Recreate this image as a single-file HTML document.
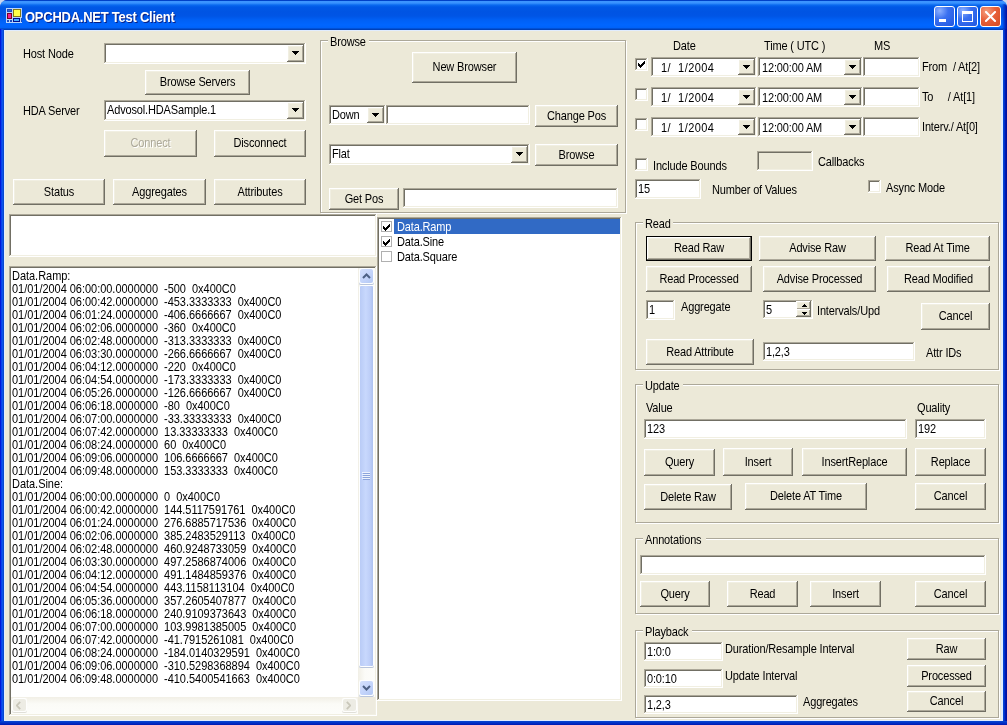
<!DOCTYPE html><html><head><meta charset="utf-8"><style>
html,body{margin:0;padding:0;width:1007px;height:725px;overflow:hidden;background:#C9D6EE}
body>*{position:absolute}
.t{will-change:transform;transform:scaleY(1.12);transform-origin:0 10.3px;font-family:"Liberation Sans",sans-serif;font-size:11px;line-height:13px;white-space:pre;color:#000;letter-spacing:-0.15px}
.tt{will-change:transform;transform:scaleY(1.12);transform-origin:0 12.5px;font-family:"Liberation Sans",sans-serif;font-size:13px;font-weight:bold;color:#fff;line-height:16px;white-space:pre;text-shadow:1px 1px 0 #0A1E80;letter-spacing:-0.25px}
</style></head><body>
<div style="left:0;top:0;width:1007px;height:725px;background:#0831D9;border-radius:8px 8px 0 0"></div>
<div style="left:0;top:0;width:1007px;height:30px;border-radius:7px 7px 0 0;background:linear-gradient(to bottom,#0041C8 0px,#0041C8 1px,#3D95FF 1px,#3A93FF 3px,#0A6AF0 5px,#0058E6 7px,#0054E3 12px,#0055E5 16px,#0060F5 20px,#0066FF 25px,#0062F8 28px,#0041B8 29px,#0041B8 30px)"></div>
<div style="left:1002px;top:4px;width:5px;height:26px;border-radius:0 4px 0 0;background:linear-gradient(to right,rgba(0,40,200,0),rgba(0,40,190,0.6) 2px,#0020B0 4px,#0010A0 5px)"></div>
<div style="left:0;top:29px;width:4px;height:696px;background:linear-gradient(to right,#0010D0,#0020E0 1px,#1060FF 2px,#0848D0 3px)"></div>
<div style="left:1003px;top:29px;width:4px;height:696px;background:linear-gradient(to right,#0848D0,#0040D8 1px,#0020C0 2px,#0010A0 3px)"></div>
<div style="left:0;top:721px;width:1007px;height:4px;background:linear-gradient(to bottom,#0848D0,#0030C8 2px,#0018B0 4px)"></div>
<div style="left:4px;top:30px;width:999px;height:691px;background:#E0ECFF"></div>
<div style="left:5px;top:31px;width:996px;height:689px;background:#ECE9D8"></div>
<svg style="left:6px;top:8px" width="16" height="15">
<rect x="0" y="0" width="16" height="15" fill="#B8D4FA"/>
<rect x="1" y="1" width="5" height="3" fill="#1C4CC0"/><rect x="2" y="2" width="3" height="1" fill="#3466D8"/>
<rect x="1" y="5" width="5" height="6" fill="#7A0020"/><rect x="2" y="6" width="3" height="4" fill="#F2208C"/>
<rect x="7" y="1" width="8" height="8" fill="#857812"/><rect x="8" y="2" width="6" height="6" fill="#FFFF48"/>
<rect x="7" y="10" width="7" height="4" fill="#000C8C"/><rect x="8" y="11" width="5" height="2" fill="#48AEFF"/>
<rect x="1" y="12" width="2" height="2" fill="#1C4CC0"/><rect x="4" y="12" width="2" height="2" fill="#1C4CC0"/>
<rect x="15" y="10" width="1" height="4" fill="#1C4CC0"/>
</svg>
<div class="tt" style="left:25px;top:10px">OPCHDA.NET Test Client</div>
<div style="left:934px;top:6px;width:19px;height:19px;border:1px solid #FFFFFF;border-radius:3px;background:radial-gradient(circle at 25% 20%,#8CB0FF 0%,#3A70F0 40%,#1F56E0 100%)"></div>
<div style="left:957px;top:6px;width:19px;height:19px;border:1px solid #FFFFFF;border-radius:3px;background:radial-gradient(circle at 25% 20%,#8CB0FF 0%,#3A70F0 40%,#1F56E0 100%)"></div>
<div style="left:980px;top:6px;width:19px;height:19px;border:1px solid #FFFFFF;border-radius:3px;background:radial-gradient(circle at 30% 25%,#F5A080 0%,#E8603A 45%,#D24A20 100%)"></div>
<div style="left:939px;top:19px;width:7px;height:3px;background:#fff"></div>
<div style="left:962px;top:11px;width:11px;height:11px;border:1px solid #fff;border-top-width:3px;box-sizing:border-box"></div>
<svg style="left:985px;top:11px" width="11" height="11"><path d="M1 1L10 10M10 1L1 10" stroke="#fff" stroke-width="2" stroke-linecap="square"/></svg>
<div class="t" style="left:23px;top:48px;color:#000;">Host Node</div>
<div style="left:104px;top:43px;width:202px;height:21px;background:#FFFFFF"></div>
<div style="left:104px;top:43px;width:201px;height:20px;background:#ACA899"></div>
<div style="left:105px;top:44px;width:200px;height:19px;background:#F1EFE2"></div>
<div style="left:105px;top:44px;width:199px;height:18px;background:#716F64"></div>
<div style="left:106px;top:45px;width:198px;height:17px;background:#FFFFFF"></div>
<div style="left:287px;top:45px;width:17px;height:17px;background:#716F64"></div>
<div style="left:287px;top:45px;width:16px;height:16px;background:#FFFFFF"></div>
<div style="left:288px;top:46px;width:15px;height:15px;background:#ACA899"></div>
<div style="left:288px;top:46px;width:14px;height:14px;background:#F1EFE2"></div>
<div style="left:289px;top:47px;width:13px;height:13px;background:#ECE9D8"></div>
<svg style="left:292px;top:51px" width="7" height="4"><path d="M0 0h7v1h-1v1h-1v1h-1v1h-1v-1h-1v-1h-1v-1h-1z" fill="#000"/></svg>
<div style="left:145px;top:70px;width:105px;height:25px;background:#716F64"></div>
<div style="left:145px;top:70px;width:104px;height:24px;background:#FFFFFF"></div>
<div style="left:146px;top:71px;width:103px;height:23px;background:#ACA899"></div>
<div style="left:146px;top:71px;width:102px;height:22px;background:#F1EFE2"></div>
<div style="left:147px;top:72px;width:101px;height:21px;background:#ECE9D8"></div>
<div class="t" style="left:145px;top:76px;width:105px;text-align:center;color:#000;">Browse Servers</div>
<div class="t" style="left:23px;top:105px;color:#000;">HDA Server</div>
<div style="left:104px;top:100px;width:202px;height:21px;background:#FFFFFF"></div>
<div style="left:104px;top:100px;width:201px;height:20px;background:#ACA899"></div>
<div style="left:105px;top:101px;width:200px;height:19px;background:#F1EFE2"></div>
<div style="left:105px;top:101px;width:199px;height:18px;background:#716F64"></div>
<div style="left:106px;top:102px;width:198px;height:17px;background:#FFFFFF"></div>
<div style="left:287px;top:102px;width:17px;height:17px;background:#716F64"></div>
<div style="left:287px;top:102px;width:16px;height:16px;background:#FFFFFF"></div>
<div style="left:288px;top:103px;width:15px;height:15px;background:#ACA899"></div>
<div style="left:288px;top:103px;width:14px;height:14px;background:#F1EFE2"></div>
<div style="left:289px;top:104px;width:13px;height:13px;background:#ECE9D8"></div>
<svg style="left:292px;top:108px" width="7" height="4"><path d="M0 0h7v1h-1v1h-1v1h-1v1h-1v-1h-1v-1h-1v-1h-1z" fill="#000"/></svg>
<div class="t" style="left:107px;top:104px;color:#000;">Advosol.HDASample.1</div>
<div style="left:104px;top:130px;width:93px;height:27px;background:#716F64"></div>
<div style="left:104px;top:130px;width:92px;height:26px;background:#FFFFFF"></div>
<div style="left:105px;top:131px;width:91px;height:25px;background:#ACA899"></div>
<div style="left:105px;top:131px;width:90px;height:24px;background:#F1EFE2"></div>
<div style="left:106px;top:132px;width:89px;height:23px;background:#ECE9D8"></div>
<div class="t" style="left:105px;top:138px;width:93px;text-align:center;color:#FFFFFF;">Connect</div>
<div class="t" style="left:104px;top:137px;width:93px;text-align:center;color:#ACA899;">Connect</div>
<div style="left:214px;top:130px;width:92px;height:27px;background:#716F64"></div>
<div style="left:214px;top:130px;width:91px;height:26px;background:#FFFFFF"></div>
<div style="left:215px;top:131px;width:90px;height:25px;background:#ACA899"></div>
<div style="left:215px;top:131px;width:89px;height:24px;background:#F1EFE2"></div>
<div style="left:216px;top:132px;width:88px;height:23px;background:#ECE9D8"></div>
<div class="t" style="left:214px;top:137px;width:92px;text-align:center;color:#000;">Disconnect</div>
<div style="left:13px;top:179px;width:92px;height:26px;background:#716F64"></div>
<div style="left:13px;top:179px;width:91px;height:25px;background:#FFFFFF"></div>
<div style="left:14px;top:180px;width:90px;height:24px;background:#ACA899"></div>
<div style="left:14px;top:180px;width:89px;height:23px;background:#F1EFE2"></div>
<div style="left:15px;top:181px;width:88px;height:22px;background:#ECE9D8"></div>
<div class="t" style="left:13px;top:186px;width:92px;text-align:center;color:#000;">Status</div>
<div style="left:113px;top:179px;width:93px;height:26px;background:#716F64"></div>
<div style="left:113px;top:179px;width:92px;height:25px;background:#FFFFFF"></div>
<div style="left:114px;top:180px;width:91px;height:24px;background:#ACA899"></div>
<div style="left:114px;top:180px;width:90px;height:23px;background:#F1EFE2"></div>
<div style="left:115px;top:181px;width:89px;height:22px;background:#ECE9D8"></div>
<div class="t" style="left:113px;top:186px;width:93px;text-align:center;color:#000;">Aggregates</div>
<div style="left:214px;top:179px;width:92px;height:26px;background:#716F64"></div>
<div style="left:214px;top:179px;width:91px;height:25px;background:#FFFFFF"></div>
<div style="left:215px;top:180px;width:90px;height:24px;background:#ACA899"></div>
<div style="left:215px;top:180px;width:89px;height:23px;background:#F1EFE2"></div>
<div style="left:216px;top:181px;width:88px;height:22px;background:#ECE9D8"></div>
<div class="t" style="left:214px;top:186px;width:92px;text-align:center;color:#000;">Attributes</div>
<div style="left:321px;top:41px;width:306px;height:173px;border:1px solid #FFFFFF;box-sizing:border-box"></div>
<div style="left:320px;top:40px;width:306px;height:173px;border:1px solid #ACA899;box-sizing:border-box"></div>
<div style="left:328px;top:34px;width:41px;height:13px;background:#ECE9D8"></div>
<div class="t" style="left:330px;top:36px;color:#000;">Browse</div>
<div style="left:412px;top:52px;width:105px;height:31px;background:#716F64"></div>
<div style="left:412px;top:52px;width:104px;height:30px;background:#FFFFFF"></div>
<div style="left:413px;top:53px;width:103px;height:29px;background:#ACA899"></div>
<div style="left:413px;top:53px;width:102px;height:28px;background:#F1EFE2"></div>
<div style="left:414px;top:54px;width:101px;height:27px;background:#ECE9D8"></div>
<div class="t" style="left:412px;top:61px;width:105px;text-align:center;color:#000;">New Browser</div>
<div style="left:329px;top:105px;width:57px;height:20px;background:#FFFFFF"></div>
<div style="left:329px;top:105px;width:56px;height:19px;background:#ACA899"></div>
<div style="left:330px;top:106px;width:55px;height:18px;background:#F1EFE2"></div>
<div style="left:330px;top:106px;width:54px;height:17px;background:#716F64"></div>
<div style="left:331px;top:107px;width:53px;height:16px;background:#FFFFFF"></div>
<div style="left:367px;top:107px;width:17px;height:16px;background:#716F64"></div>
<div style="left:367px;top:107px;width:16px;height:15px;background:#FFFFFF"></div>
<div style="left:368px;top:108px;width:15px;height:14px;background:#ACA899"></div>
<div style="left:368px;top:108px;width:14px;height:13px;background:#F1EFE2"></div>
<div style="left:369px;top:109px;width:13px;height:12px;background:#ECE9D8"></div>
<svg style="left:372px;top:113px" width="7" height="4"><path d="M0 0h7v1h-1v1h-1v1h-1v1h-1v-1h-1v-1h-1v-1h-1z" fill="#000"/></svg>
<div class="t" style="left:332px;top:109px;color:#000;">Down</div>
<div style="left:386px;top:105px;width:144px;height:20px;background:#FFFFFF"></div>
<div style="left:386px;top:105px;width:143px;height:19px;background:#ACA899"></div>
<div style="left:387px;top:106px;width:142px;height:18px;background:#F1EFE2"></div>
<div style="left:387px;top:106px;width:141px;height:17px;background:#716F64"></div>
<div style="left:388px;top:107px;width:140px;height:16px;background:#FFFFFF"></div>
<div style="left:535px;top:105px;width:83px;height:22px;background:#716F64"></div>
<div style="left:535px;top:105px;width:82px;height:21px;background:#FFFFFF"></div>
<div style="left:536px;top:106px;width:81px;height:20px;background:#ACA899"></div>
<div style="left:536px;top:106px;width:80px;height:19px;background:#F1EFE2"></div>
<div style="left:537px;top:107px;width:79px;height:18px;background:#ECE9D8"></div>
<div class="t" style="left:535px;top:110px;width:83px;text-align:center;color:#000;">Change Pos</div>
<div style="left:329px;top:144px;width:201px;height:21px;background:#FFFFFF"></div>
<div style="left:329px;top:144px;width:200px;height:20px;background:#ACA899"></div>
<div style="left:330px;top:145px;width:199px;height:19px;background:#F1EFE2"></div>
<div style="left:330px;top:145px;width:198px;height:18px;background:#716F64"></div>
<div style="left:331px;top:146px;width:197px;height:17px;background:#FFFFFF"></div>
<div style="left:511px;top:146px;width:17px;height:17px;background:#716F64"></div>
<div style="left:511px;top:146px;width:16px;height:16px;background:#FFFFFF"></div>
<div style="left:512px;top:147px;width:15px;height:15px;background:#ACA899"></div>
<div style="left:512px;top:147px;width:14px;height:14px;background:#F1EFE2"></div>
<div style="left:513px;top:148px;width:13px;height:13px;background:#ECE9D8"></div>
<svg style="left:516px;top:152px" width="7" height="4"><path d="M0 0h7v1h-1v1h-1v1h-1v1h-1v-1h-1v-1h-1v-1h-1z" fill="#000"/></svg>
<div class="t" style="left:332px;top:148px;color:#000;">Flat</div>
<div style="left:535px;top:144px;width:83px;height:22px;background:#716F64"></div>
<div style="left:535px;top:144px;width:82px;height:21px;background:#FFFFFF"></div>
<div style="left:536px;top:145px;width:81px;height:20px;background:#ACA899"></div>
<div style="left:536px;top:145px;width:80px;height:19px;background:#F1EFE2"></div>
<div style="left:537px;top:146px;width:79px;height:18px;background:#ECE9D8"></div>
<div class="t" style="left:535px;top:149px;width:83px;text-align:center;color:#000;">Browse</div>
<div style="left:329px;top:188px;width:70px;height:22px;background:#716F64"></div>
<div style="left:329px;top:188px;width:69px;height:21px;background:#FFFFFF"></div>
<div style="left:330px;top:189px;width:68px;height:20px;background:#ACA899"></div>
<div style="left:330px;top:189px;width:67px;height:19px;background:#F1EFE2"></div>
<div style="left:331px;top:190px;width:66px;height:18px;background:#ECE9D8"></div>
<div class="t" style="left:329px;top:193px;width:70px;text-align:center;color:#000;">Get Pos</div>
<div style="left:403px;top:188px;width:215px;height:20px;background:#FFFFFF"></div>
<div style="left:403px;top:188px;width:214px;height:19px;background:#ACA899"></div>
<div style="left:404px;top:189px;width:213px;height:18px;background:#F1EFE2"></div>
<div style="left:404px;top:189px;width:212px;height:17px;background:#716F64"></div>
<div style="left:405px;top:190px;width:211px;height:16px;background:#FFFFFF"></div>
<div style="left:9px;top:214px;width:368px;height:43px;background:#FFFFFF"></div>
<div style="left:9px;top:214px;width:367px;height:42px;background:#ACA899"></div>
<div style="left:10px;top:215px;width:366px;height:41px;background:#F1EFE2"></div>
<div style="left:10px;top:215px;width:365px;height:40px;background:#716F64"></div>
<div style="left:11px;top:216px;width:364px;height:39px;background:#FFFFFF"></div>
<div style="left:9px;top:266px;width:368px;height:450px;background:#FFFFFF"></div>
<div style="left:9px;top:266px;width:367px;height:449px;background:#ACA899"></div>
<div style="left:10px;top:267px;width:366px;height:448px;background:#F1EFE2"></div>
<div style="left:10px;top:267px;width:365px;height:447px;background:#716F64"></div>
<div style="left:11px;top:268px;width:364px;height:446px;background:#FFFFFF"></div>
<div class="t" style="left:12px;top:270px;color:#000;letter-spacing:-0.03px">Data.Ramp:</div>
<div class="t" style="left:12px;top:283px;color:#000;letter-spacing:-0.03px">01/01/2004 06:00:00.0000000  -500  0x400C0</div>
<div class="t" style="left:12px;top:296px;color:#000;letter-spacing:-0.03px">01/01/2004 06:00:42.0000000  -453.3333333  0x400C0</div>
<div class="t" style="left:12px;top:309px;color:#000;letter-spacing:-0.03px">01/01/2004 06:01:24.0000000  -406.6666667  0x400C0</div>
<div class="t" style="left:12px;top:322px;color:#000;letter-spacing:-0.03px">01/01/2004 06:02:06.0000000  -360  0x400C0</div>
<div class="t" style="left:12px;top:335px;color:#000;letter-spacing:-0.03px">01/01/2004 06:02:48.0000000  -313.3333333  0x400C0</div>
<div class="t" style="left:12px;top:348px;color:#000;letter-spacing:-0.03px">01/01/2004 06:03:30.0000000  -266.6666667  0x400C0</div>
<div class="t" style="left:12px;top:361px;color:#000;letter-spacing:-0.03px">01/01/2004 06:04:12.0000000  -220  0x400C0</div>
<div class="t" style="left:12px;top:374px;color:#000;letter-spacing:-0.03px">01/01/2004 06:04:54.0000000  -173.3333333  0x400C0</div>
<div class="t" style="left:12px;top:387px;color:#000;letter-spacing:-0.03px">01/01/2004 06:05:26.0000000  -126.6666667  0x400C0</div>
<div class="t" style="left:12px;top:400px;color:#000;letter-spacing:-0.03px">01/01/2004 06:06:18.0000000  -80  0x400C0</div>
<div class="t" style="left:12px;top:413px;color:#000;letter-spacing:-0.03px">01/01/2004 06:07:00.0000000  -33.33333333  0x400C0</div>
<div class="t" style="left:12px;top:426px;color:#000;letter-spacing:-0.03px">01/01/2004 06:07:42.0000000  13.33333333  0x400C0</div>
<div class="t" style="left:12px;top:439px;color:#000;letter-spacing:-0.03px">01/01/2004 06:08:24.0000000  60  0x400C0</div>
<div class="t" style="left:12px;top:452px;color:#000;letter-spacing:-0.03px">01/01/2004 06:09:06.0000000  106.6666667  0x400C0</div>
<div class="t" style="left:12px;top:465px;color:#000;letter-spacing:-0.03px">01/01/2004 06:09:48.0000000  153.3333333  0x400C0</div>
<div class="t" style="left:12px;top:478px;color:#000;letter-spacing:-0.03px">Data.Sine:</div>
<div class="t" style="left:12px;top:491px;color:#000;letter-spacing:-0.03px">01/01/2004 06:00:00.0000000  0  0x400C0</div>
<div class="t" style="left:12px;top:504px;color:#000;letter-spacing:-0.03px">01/01/2004 06:00:42.0000000  144.5117591761  0x400C0</div>
<div class="t" style="left:12px;top:517px;color:#000;letter-spacing:-0.03px">01/01/2004 06:01:24.0000000  276.6885717536  0x400C0</div>
<div class="t" style="left:12px;top:530px;color:#000;letter-spacing:-0.03px">01/01/2004 06:02:06.0000000  385.2483529113  0x400C0</div>
<div class="t" style="left:12px;top:543px;color:#000;letter-spacing:-0.03px">01/01/2004 06:02:48.0000000  460.9248733059  0x400C0</div>
<div class="t" style="left:12px;top:556px;color:#000;letter-spacing:-0.03px">01/01/2004 06:03:30.0000000  497.2586874006  0x400C0</div>
<div class="t" style="left:12px;top:569px;color:#000;letter-spacing:-0.03px">01/01/2004 06:04:12.0000000  491.1484859376  0x400C0</div>
<div class="t" style="left:12px;top:582px;color:#000;letter-spacing:-0.03px">01/01/2004 06:04:54.0000000  443.1158113104  0x400C0</div>
<div class="t" style="left:12px;top:595px;color:#000;letter-spacing:-0.03px">01/01/2004 06:05:36.0000000  357.2605407877  0x400C0</div>
<div class="t" style="left:12px;top:608px;color:#000;letter-spacing:-0.03px">01/01/2004 06:06:18.0000000  240.9109373643  0x400C0</div>
<div class="t" style="left:12px;top:621px;color:#000;letter-spacing:-0.03px">01/01/2004 06:07:00.0000000  103.9981385005  0x400C0</div>
<div class="t" style="left:12px;top:634px;color:#000;letter-spacing:-0.03px">01/01/2004 06:07:42.0000000  -41.7915261081  0x400C0</div>
<div class="t" style="left:12px;top:647px;color:#000;letter-spacing:-0.03px">01/01/2004 06:08:24.0000000  -184.0140329591  0x400C0</div>
<div class="t" style="left:12px;top:660px;color:#000;letter-spacing:-0.03px">01/01/2004 06:09:06.0000000  -310.5298368894  0x400C0</div>
<div class="t" style="left:12px;top:673px;color:#000;letter-spacing:-0.03px">01/01/2004 06:09:48.0000000  -410.5400541663  0x400C0</div>
<div style="left:358px;top:268px;width:17px;height:429px;background:linear-gradient(to right,#F1EFE6,#FBFBF7 40%,#FDFDFA)"></div>
<div style="left:359px;top:268px;width:15px;height:16px;border-radius:2px;background:#FDFEFF;box-shadow:0 1px 0 #B9C5DC"></div>
<div style="left:360px;top:269px;width:13px;height:14px;border-radius:2px;background:linear-gradient(135deg,#D4E0FD 0%,#C5D5FB 50%,#B3C8F4 100%)"></div>
<svg style="left:362px;top:273px" width="9" height="6"><path d="M1 5L4.5 1.5L8 5" stroke="#4D6185" stroke-width="2" fill="none"/></svg>
<div style="left:359px;top:285px;width:15px;height:382px;border-radius:2px;background:#FDFEFF;box-shadow:0 1px 0 #B9C5DC"></div>
<div style="left:360px;top:286px;width:13px;height:380px;border-radius:1px;background:linear-gradient(to right,#B9CBF6,#C8D8FD 45%,#BCCDF7 80%,#ADC1EE)"></div>
<svg style="left:362px;top:472px" width="8" height="8"><path d="M0 0.5h8M0 2.5h8M0 4.5h8M0 6.5h8" stroke="#EEF4FE" stroke-width="1"/><path d="M1 1.5h7M1 3.5h7M1 5.5h7M1 7.5h7" stroke="#8CA5DC" stroke-width="1"/></svg>
<div style="left:359px;top:680px;width:15px;height:16px;border-radius:2px;background:#FDFEFF;box-shadow:0 1px 0 #B9C5DC"></div>
<div style="left:360px;top:681px;width:13px;height:14px;border-radius:2px;background:linear-gradient(135deg,#D4E0FD 0%,#C5D5FB 50%,#B3C8F4 100%)"></div>
<svg style="left:362px;top:685px" width="9" height="6"><path d="M1 1L4.5 4.5L8 1" stroke="#4D6185" stroke-width="2" fill="none"/></svg>
<div style="left:11px;top:697px;width:347px;height:17px;background:linear-gradient(to bottom,#F1EFE6,#FBFBF7 40%,#FDFDFA)"></div>
<div style="left:12px;top:698px;width:15px;height:14px;border-radius:2px;background:#FEFEFD;box-shadow:0 1px 0 #E0DFD8"></div>
<div style="left:13px;top:699px;width:13px;height:12px;border-radius:2px;background:#EDECE4"></div>
<svg style="left:16px;top:701px" width="5" height="9"><path d="M4.2 0.8L0.8 4.5L4.2 8.2" stroke="#C9C7BA" stroke-width="1.8" fill="none"/></svg>
<div style="left:342px;top:698px;width:15px;height:14px;border-radius:2px;background:#FEFEFD;box-shadow:0 1px 0 #E0DFD8"></div>
<div style="left:343px;top:699px;width:13px;height:12px;border-radius:2px;background:#EDECE4"></div>
<svg style="left:346px;top:701px" width="5" height="9"><path d="M0.8 0.8L4.2 4.5L0.8 8.2" stroke="#C9C7BA" stroke-width="1.8" fill="none"/></svg>
<div style="left:358px;top:697px;width:17px;height:17px;background:#EEEBDF"></div>
<div style="left:377px;top:217px;width:245px;height:484px;background:#FFFFFF"></div>
<div style="left:377px;top:217px;width:244px;height:483px;background:#ACA899"></div>
<div style="left:378px;top:218px;width:243px;height:482px;background:#F1EFE2"></div>
<div style="left:378px;top:218px;width:242px;height:481px;background:#716F64"></div>
<div style="left:379px;top:219px;width:241px;height:480px;background:#FFFFFF"></div>
<div style="left:394px;top:219px;width:226px;height:15px;background:#316AC5"></div>
<div style="left:381px;top:221px;width:11px;height:11px;border:1px solid #B0B0B0;box-sizing:border-box;background:#fff"></div>
<svg style="left:383px;top:224px" width="7" height="7"><path d="M6 0h1v3h-1v1h-1v1h-1v1h-1v1h-1v-1h-1v-1h-1v-3h1v1h1v1h1v-1h1v-1h1v-1h1z" fill="#000"/></svg>
<div class="t" style="left:397px;top:221px;color:#fff;">Data.Ramp</div>
<div style="left:381px;top:236px;width:11px;height:11px;border:1px solid #B0B0B0;box-sizing:border-box;background:#fff"></div>
<svg style="left:383px;top:239px" width="7" height="7"><path d="M6 0h1v3h-1v1h-1v1h-1v1h-1v1h-1v-1h-1v-1h-1v-3h1v1h1v1h1v-1h1v-1h1v-1h1z" fill="#000"/></svg>
<div class="t" style="left:397px;top:236px;color:#000;">Data.Sine</div>
<div style="left:381px;top:251px;width:11px;height:11px;border:1px solid #B0B0B0;box-sizing:border-box;background:#fff"></div>
<div class="t" style="left:397px;top:251px;color:#000;">Data.Square</div>
<div class="t" style="left:673px;top:40px;color:#000;">Date</div>
<div class="t" style="left:764px;top:40px;color:#000;">Time ( UTC )</div>
<div class="t" style="left:874px;top:40px;color:#000;">MS</div>
<div style="left:635px;top:58px;width:13px;height:13px;background:#FFFFFF"></div>
<div style="left:635px;top:58px;width:12px;height:12px;background:#ACA899"></div>
<div style="left:636px;top:59px;width:11px;height:11px;background:#F1EFE2"></div>
<div style="left:636px;top:59px;width:10px;height:10px;background:#716F64"></div>
<div style="left:637px;top:60px;width:9px;height:9px;background:#FFFFFF"></div>
<svg style="left:638px;top:61px" width="7" height="7"><path d="M6 0h1v3h-1v1h-1v1h-1v1h-1v1h-1v-1h-1v-1h-1v-3h1v1h1v1h1v-1h1v-1h1v-1h1z" fill="#000"/></svg>
<div style="left:651px;top:57px;width:106px;height:20px;background:#FFFFFF"></div>
<div style="left:651px;top:57px;width:105px;height:19px;background:#ACA899"></div>
<div style="left:652px;top:58px;width:104px;height:18px;background:#F1EFE2"></div>
<div style="left:652px;top:58px;width:103px;height:17px;background:#716F64"></div>
<div style="left:653px;top:59px;width:102px;height:16px;background:#FFFFFF"></div>
<div style="left:738px;top:59px;width:17px;height:16px;background:#716F64"></div>
<div style="left:738px;top:59px;width:16px;height:15px;background:#FFFFFF"></div>
<div style="left:739px;top:60px;width:15px;height:14px;background:#ACA899"></div>
<div style="left:739px;top:60px;width:14px;height:13px;background:#F1EFE2"></div>
<div style="left:740px;top:61px;width:13px;height:12px;background:#ECE9D8"></div>
<svg style="left:743px;top:65px" width="7" height="4"><path d="M0 0h7v1h-1v1h-1v1h-1v1h-1v-1h-1v-1h-1v-1h-1z" fill="#000"/></svg>
<div class="t" style="left:661px;top:62px;color:#000;letter-spacing:0.45px">1/&nbsp; 1/2004</div>
<div style="left:758px;top:57px;width:105px;height:20px;background:#FFFFFF"></div>
<div style="left:758px;top:57px;width:104px;height:19px;background:#ACA899"></div>
<div style="left:759px;top:58px;width:103px;height:18px;background:#F1EFE2"></div>
<div style="left:759px;top:58px;width:102px;height:17px;background:#716F64"></div>
<div style="left:760px;top:59px;width:101px;height:16px;background:#FFFFFF"></div>
<div style="left:844px;top:59px;width:17px;height:16px;background:#716F64"></div>
<div style="left:844px;top:59px;width:16px;height:15px;background:#FFFFFF"></div>
<div style="left:845px;top:60px;width:15px;height:14px;background:#ACA899"></div>
<div style="left:845px;top:60px;width:14px;height:13px;background:#F1EFE2"></div>
<div style="left:846px;top:61px;width:13px;height:12px;background:#ECE9D8"></div>
<svg style="left:849px;top:65px" width="7" height="4"><path d="M0 0h7v1h-1v1h-1v1h-1v1h-1v-1h-1v-1h-1v-1h-1z" fill="#000"/></svg>
<div class="t" style="left:762px;top:62px;color:#000;">12:00:00 AM</div>
<div style="left:863px;top:57px;width:57px;height:20px;background:#FFFFFF"></div>
<div style="left:863px;top:57px;width:56px;height:19px;background:#ACA899"></div>
<div style="left:864px;top:58px;width:55px;height:18px;background:#F1EFE2"></div>
<div style="left:864px;top:58px;width:54px;height:17px;background:#716F64"></div>
<div style="left:865px;top:59px;width:53px;height:16px;background:#FFFFFF"></div>
<div class="t" style="left:922px;top:61px;color:#000;">From&nbsp; / At[2]</div>
<div style="left:635px;top:88px;width:13px;height:13px;background:#FFFFFF"></div>
<div style="left:635px;top:88px;width:12px;height:12px;background:#ACA899"></div>
<div style="left:636px;top:89px;width:11px;height:11px;background:#F1EFE2"></div>
<div style="left:636px;top:89px;width:10px;height:10px;background:#716F64"></div>
<div style="left:637px;top:90px;width:9px;height:9px;background:#FFFFFF"></div>
<div style="left:651px;top:87px;width:106px;height:20px;background:#FFFFFF"></div>
<div style="left:651px;top:87px;width:105px;height:19px;background:#ACA899"></div>
<div style="left:652px;top:88px;width:104px;height:18px;background:#F1EFE2"></div>
<div style="left:652px;top:88px;width:103px;height:17px;background:#716F64"></div>
<div style="left:653px;top:89px;width:102px;height:16px;background:#FFFFFF"></div>
<div style="left:738px;top:89px;width:17px;height:16px;background:#716F64"></div>
<div style="left:738px;top:89px;width:16px;height:15px;background:#FFFFFF"></div>
<div style="left:739px;top:90px;width:15px;height:14px;background:#ACA899"></div>
<div style="left:739px;top:90px;width:14px;height:13px;background:#F1EFE2"></div>
<div style="left:740px;top:91px;width:13px;height:12px;background:#ECE9D8"></div>
<svg style="left:743px;top:95px" width="7" height="4"><path d="M0 0h7v1h-1v1h-1v1h-1v1h-1v-1h-1v-1h-1v-1h-1z" fill="#000"/></svg>
<div class="t" style="left:661px;top:92px;color:#000;letter-spacing:0.45px">1/&nbsp; 1/2004</div>
<div style="left:758px;top:87px;width:105px;height:20px;background:#FFFFFF"></div>
<div style="left:758px;top:87px;width:104px;height:19px;background:#ACA899"></div>
<div style="left:759px;top:88px;width:103px;height:18px;background:#F1EFE2"></div>
<div style="left:759px;top:88px;width:102px;height:17px;background:#716F64"></div>
<div style="left:760px;top:89px;width:101px;height:16px;background:#FFFFFF"></div>
<div style="left:844px;top:89px;width:17px;height:16px;background:#716F64"></div>
<div style="left:844px;top:89px;width:16px;height:15px;background:#FFFFFF"></div>
<div style="left:845px;top:90px;width:15px;height:14px;background:#ACA899"></div>
<div style="left:845px;top:90px;width:14px;height:13px;background:#F1EFE2"></div>
<div style="left:846px;top:91px;width:13px;height:12px;background:#ECE9D8"></div>
<svg style="left:849px;top:95px" width="7" height="4"><path d="M0 0h7v1h-1v1h-1v1h-1v1h-1v-1h-1v-1h-1v-1h-1z" fill="#000"/></svg>
<div class="t" style="left:762px;top:92px;color:#000;">12:00:00 AM</div>
<div style="left:863px;top:87px;width:57px;height:20px;background:#FFFFFF"></div>
<div style="left:863px;top:87px;width:56px;height:19px;background:#ACA899"></div>
<div style="left:864px;top:88px;width:55px;height:18px;background:#F1EFE2"></div>
<div style="left:864px;top:88px;width:54px;height:17px;background:#716F64"></div>
<div style="left:865px;top:89px;width:53px;height:16px;background:#FFFFFF"></div>
<div class="t" style="left:922px;top:91px;color:#000;">To&nbsp;&nbsp;&nbsp;&nbsp; / At[1]</div>
<div style="left:635px;top:118px;width:13px;height:13px;background:#FFFFFF"></div>
<div style="left:635px;top:118px;width:12px;height:12px;background:#ACA899"></div>
<div style="left:636px;top:119px;width:11px;height:11px;background:#F1EFE2"></div>
<div style="left:636px;top:119px;width:10px;height:10px;background:#716F64"></div>
<div style="left:637px;top:120px;width:9px;height:9px;background:#FFFFFF"></div>
<div style="left:651px;top:117px;width:106px;height:20px;background:#FFFFFF"></div>
<div style="left:651px;top:117px;width:105px;height:19px;background:#ACA899"></div>
<div style="left:652px;top:118px;width:104px;height:18px;background:#F1EFE2"></div>
<div style="left:652px;top:118px;width:103px;height:17px;background:#716F64"></div>
<div style="left:653px;top:119px;width:102px;height:16px;background:#FFFFFF"></div>
<div style="left:738px;top:119px;width:17px;height:16px;background:#716F64"></div>
<div style="left:738px;top:119px;width:16px;height:15px;background:#FFFFFF"></div>
<div style="left:739px;top:120px;width:15px;height:14px;background:#ACA899"></div>
<div style="left:739px;top:120px;width:14px;height:13px;background:#F1EFE2"></div>
<div style="left:740px;top:121px;width:13px;height:12px;background:#ECE9D8"></div>
<svg style="left:743px;top:125px" width="7" height="4"><path d="M0 0h7v1h-1v1h-1v1h-1v1h-1v-1h-1v-1h-1v-1h-1z" fill="#000"/></svg>
<div class="t" style="left:661px;top:122px;color:#000;letter-spacing:0.45px">1/&nbsp; 1/2004</div>
<div style="left:758px;top:117px;width:105px;height:20px;background:#FFFFFF"></div>
<div style="left:758px;top:117px;width:104px;height:19px;background:#ACA899"></div>
<div style="left:759px;top:118px;width:103px;height:18px;background:#F1EFE2"></div>
<div style="left:759px;top:118px;width:102px;height:17px;background:#716F64"></div>
<div style="left:760px;top:119px;width:101px;height:16px;background:#FFFFFF"></div>
<div style="left:844px;top:119px;width:17px;height:16px;background:#716F64"></div>
<div style="left:844px;top:119px;width:16px;height:15px;background:#FFFFFF"></div>
<div style="left:845px;top:120px;width:15px;height:14px;background:#ACA899"></div>
<div style="left:845px;top:120px;width:14px;height:13px;background:#F1EFE2"></div>
<div style="left:846px;top:121px;width:13px;height:12px;background:#ECE9D8"></div>
<svg style="left:849px;top:125px" width="7" height="4"><path d="M0 0h7v1h-1v1h-1v1h-1v1h-1v-1h-1v-1h-1v-1h-1z" fill="#000"/></svg>
<div class="t" style="left:762px;top:122px;color:#000;">12:00:00 AM</div>
<div style="left:863px;top:117px;width:57px;height:20px;background:#FFFFFF"></div>
<div style="left:863px;top:117px;width:56px;height:19px;background:#ACA899"></div>
<div style="left:864px;top:118px;width:55px;height:18px;background:#F1EFE2"></div>
<div style="left:864px;top:118px;width:54px;height:17px;background:#716F64"></div>
<div style="left:865px;top:119px;width:53px;height:16px;background:#FFFFFF"></div>
<div class="t" style="left:922px;top:121px;color:#000;">Interv./ At[0]</div>
<div style="left:635px;top:158px;width:13px;height:13px;background:#FFFFFF"></div>
<div style="left:635px;top:158px;width:12px;height:12px;background:#ACA899"></div>
<div style="left:636px;top:159px;width:11px;height:11px;background:#F1EFE2"></div>
<div style="left:636px;top:159px;width:10px;height:10px;background:#716F64"></div>
<div style="left:637px;top:160px;width:9px;height:9px;background:#FFFFFF"></div>
<div class="t" style="left:653px;top:160px;color:#000;">Include Bounds</div>
<div style="left:757px;top:151px;width:56px;height:20px;background:#FFFFFF"></div>
<div style="left:757px;top:151px;width:55px;height:19px;background:#ACA899"></div>
<div style="left:758px;top:152px;width:54px;height:18px;background:#F1EFE2"></div>
<div style="left:758px;top:152px;width:53px;height:17px;background:#716F64"></div>
<div style="left:759px;top:153px;width:52px;height:16px;background:#ECE9D8"></div>
<div class="t" style="left:818px;top:156px;color:#000;">Callbacks</div>
<div style="left:635px;top:179px;width:66px;height:20px;background:#FFFFFF"></div>
<div style="left:635px;top:179px;width:65px;height:19px;background:#ACA899"></div>
<div style="left:636px;top:180px;width:64px;height:18px;background:#F1EFE2"></div>
<div style="left:636px;top:180px;width:63px;height:17px;background:#716F64"></div>
<div style="left:637px;top:181px;width:62px;height:16px;background:#FFFFFF"></div>
<div class="t" style="left:638px;top:183px;color:#000;">15</div>
<div class="t" style="left:712px;top:184px;color:#000;">Number of Values</div>
<div style="left:868px;top:180px;width:13px;height:13px;background:#FFFFFF"></div>
<div style="left:868px;top:180px;width:12px;height:12px;background:#ACA899"></div>
<div style="left:869px;top:181px;width:11px;height:11px;background:#F1EFE2"></div>
<div style="left:869px;top:181px;width:10px;height:10px;background:#716F64"></div>
<div style="left:870px;top:182px;width:9px;height:9px;background:#FFFFFF"></div>
<div class="t" style="left:886px;top:182px;color:#000;">Async Mode</div>
<div style="left:636px;top:223px;width:364px;height:148px;border:1px solid #FFFFFF;box-sizing:border-box"></div>
<div style="left:635px;top:222px;width:364px;height:148px;border:1px solid #ACA899;box-sizing:border-box"></div>
<div style="left:643px;top:216px;width:30px;height:13px;background:#ECE9D8"></div>
<div class="t" style="left:645px;top:218px;color:#000;">Read</div>
<div style="left:646px;top:236px;width:106px;height:25px;background:#000"></div>
<div style="left:647px;top:237px;width:104px;height:23px;background:#716F64"></div>
<div style="left:647px;top:237px;width:103px;height:22px;background:#FFFFFF"></div>
<div style="left:648px;top:238px;width:102px;height:21px;background:#ACA899"></div>
<div style="left:648px;top:238px;width:101px;height:20px;background:#F1EFE2"></div>
<div style="left:649px;top:239px;width:100px;height:19px;background:#ECE9D8"></div>
<div class="t" style="left:646px;top:242px;width:106px;text-align:center;color:#000;">Read Raw</div>
<div style="left:759px;top:236px;width:117px;height:25px;background:#716F64"></div>
<div style="left:759px;top:236px;width:116px;height:24px;background:#FFFFFF"></div>
<div style="left:760px;top:237px;width:115px;height:23px;background:#ACA899"></div>
<div style="left:760px;top:237px;width:114px;height:22px;background:#F1EFE2"></div>
<div style="left:761px;top:238px;width:113px;height:21px;background:#ECE9D8"></div>
<div class="t" style="left:759px;top:242px;width:117px;text-align:center;color:#000;">Advise Raw</div>
<div style="left:885px;top:236px;width:105px;height:25px;background:#716F64"></div>
<div style="left:885px;top:236px;width:104px;height:24px;background:#FFFFFF"></div>
<div style="left:886px;top:237px;width:103px;height:23px;background:#ACA899"></div>
<div style="left:886px;top:237px;width:102px;height:22px;background:#F1EFE2"></div>
<div style="left:887px;top:238px;width:101px;height:21px;background:#ECE9D8"></div>
<div class="t" style="left:885px;top:242px;width:105px;text-align:center;color:#000;">Read At Time</div>
<div style="left:646px;top:266px;width:106px;height:26px;background:#716F64"></div>
<div style="left:646px;top:266px;width:105px;height:25px;background:#FFFFFF"></div>
<div style="left:647px;top:267px;width:104px;height:24px;background:#ACA899"></div>
<div style="left:647px;top:267px;width:103px;height:23px;background:#F1EFE2"></div>
<div style="left:648px;top:268px;width:102px;height:22px;background:#ECE9D8"></div>
<div class="t" style="left:646px;top:273px;width:106px;text-align:center;color:#000;">Read Processed</div>
<div style="left:763px;top:266px;width:113px;height:26px;background:#716F64"></div>
<div style="left:763px;top:266px;width:112px;height:25px;background:#FFFFFF"></div>
<div style="left:764px;top:267px;width:111px;height:24px;background:#ACA899"></div>
<div style="left:764px;top:267px;width:110px;height:23px;background:#F1EFE2"></div>
<div style="left:765px;top:268px;width:109px;height:22px;background:#ECE9D8"></div>
<div class="t" style="left:763px;top:273px;width:113px;text-align:center;color:#000;">Advise Processed</div>
<div style="left:887px;top:266px;width:103px;height:26px;background:#716F64"></div>
<div style="left:887px;top:266px;width:102px;height:25px;background:#FFFFFF"></div>
<div style="left:888px;top:267px;width:101px;height:24px;background:#ACA899"></div>
<div style="left:888px;top:267px;width:100px;height:23px;background:#F1EFE2"></div>
<div style="left:889px;top:268px;width:99px;height:22px;background:#ECE9D8"></div>
<div class="t" style="left:887px;top:273px;width:103px;text-align:center;color:#000;">Read Modified</div>
<div style="left:646px;top:300px;width:29px;height:20px;background:#FFFFFF"></div>
<div style="left:646px;top:300px;width:28px;height:19px;background:#ACA899"></div>
<div style="left:647px;top:301px;width:27px;height:18px;background:#F1EFE2"></div>
<div style="left:647px;top:301px;width:26px;height:17px;background:#716F64"></div>
<div style="left:648px;top:302px;width:25px;height:16px;background:#FFFFFF"></div>
<div class="t" style="left:649px;top:304px;color:#000;">1</div>
<div class="t" style="left:681px;top:301px;color:#000;">Aggregate</div>
<div style="left:763px;top:300px;width:50px;height:19px;background:#FFFFFF"></div>
<div style="left:763px;top:300px;width:49px;height:18px;background:#ACA899"></div>
<div style="left:764px;top:301px;width:48px;height:17px;background:#F1EFE2"></div>
<div style="left:764px;top:301px;width:47px;height:16px;background:#716F64"></div>
<div style="left:765px;top:302px;width:46px;height:15px;background:#FFFFFF"></div>
<div style="left:796px;top:301px;width:15px;height:9px;background:#716F64"></div>
<div style="left:796px;top:301px;width:14px;height:8px;background:#FFFFFF"></div>
<div style="left:797px;top:302px;width:13px;height:7px;background:#ACA899"></div>
<div style="left:797px;top:302px;width:12px;height:6px;background:#F1EFE2"></div>
<div style="left:798px;top:303px;width:11px;height:5px;background:#ECE9D8"></div>
<div style="left:796px;top:309px;width:15px;height:8px;background:#716F64"></div>
<div style="left:796px;top:309px;width:14px;height:7px;background:#FFFFFF"></div>
<div style="left:797px;top:310px;width:13px;height:6px;background:#ACA899"></div>
<div style="left:797px;top:310px;width:12px;height:5px;background:#F1EFE2"></div>
<div style="left:798px;top:311px;width:11px;height:4px;background:#ECE9D8"></div>
<svg style="left:802px;top:304px" width="5" height="3"><path d="M2 0h1v1h1v1h1v1h-5v-1h1v-1h1z" fill="#000"/></svg>
<svg style="left:802px;top:312px" width="5" height="3"><path d="M0 0h5v1h-1v1h-1v1h-1v-1h-1v-1h-1z" fill="#000"/></svg>
<div class="t" style="left:766px;top:304px;color:#000;">5</div>
<div class="t" style="left:817px;top:305px;color:#000;">Intervals/Upd</div>
<div style="left:921px;top:303px;width:69px;height:27px;background:#716F64"></div>
<div style="left:921px;top:303px;width:68px;height:26px;background:#FFFFFF"></div>
<div style="left:922px;top:304px;width:67px;height:25px;background:#ACA899"></div>
<div style="left:922px;top:304px;width:66px;height:24px;background:#F1EFE2"></div>
<div style="left:923px;top:305px;width:65px;height:23px;background:#ECE9D8"></div>
<div class="t" style="left:921px;top:310px;width:69px;text-align:center;color:#000;">Cancel</div>
<div style="left:646px;top:339px;width:108px;height:26px;background:#716F64"></div>
<div style="left:646px;top:339px;width:107px;height:25px;background:#FFFFFF"></div>
<div style="left:647px;top:340px;width:106px;height:24px;background:#ACA899"></div>
<div style="left:647px;top:340px;width:105px;height:23px;background:#F1EFE2"></div>
<div style="left:648px;top:341px;width:104px;height:22px;background:#ECE9D8"></div>
<div class="t" style="left:646px;top:346px;width:108px;text-align:center;color:#000;">Read Attribute</div>
<div style="left:763px;top:342px;width:152px;height:19px;background:#FFFFFF"></div>
<div style="left:763px;top:342px;width:151px;height:18px;background:#ACA899"></div>
<div style="left:764px;top:343px;width:150px;height:17px;background:#F1EFE2"></div>
<div style="left:764px;top:343px;width:149px;height:16px;background:#716F64"></div>
<div style="left:765px;top:344px;width:148px;height:15px;background:#FFFFFF"></div>
<div class="t" style="left:766px;top:346px;color:#000;">1,2,3</div>
<div class="t" style="left:926px;top:347px;color:#000;">Attr IDs</div>
<div style="left:636px;top:385px;width:364px;height:139px;border:1px solid #FFFFFF;box-sizing:border-box"></div>
<div style="left:635px;top:384px;width:364px;height:139px;border:1px solid #ACA899;box-sizing:border-box"></div>
<div style="left:643px;top:378px;width:40px;height:13px;background:#ECE9D8"></div>
<div class="t" style="left:645px;top:380px;color:#000;">Update</div>
<div class="t" style="left:646px;top:402px;color:#000;">Value</div>
<div class="t" style="left:917px;top:402px;color:#000;">Quality</div>
<div style="left:644px;top:419px;width:263px;height:20px;background:#FFFFFF"></div>
<div style="left:644px;top:419px;width:262px;height:19px;background:#ACA899"></div>
<div style="left:645px;top:420px;width:261px;height:18px;background:#F1EFE2"></div>
<div style="left:645px;top:420px;width:260px;height:17px;background:#716F64"></div>
<div style="left:646px;top:421px;width:259px;height:16px;background:#FFFFFF"></div>
<div class="t" style="left:647px;top:423px;color:#000;">123</div>
<div style="left:915px;top:419px;width:71px;height:20px;background:#FFFFFF"></div>
<div style="left:915px;top:419px;width:70px;height:19px;background:#ACA899"></div>
<div style="left:916px;top:420px;width:69px;height:18px;background:#F1EFE2"></div>
<div style="left:916px;top:420px;width:68px;height:17px;background:#716F64"></div>
<div style="left:917px;top:421px;width:67px;height:16px;background:#FFFFFF"></div>
<div class="t" style="left:918px;top:423px;color:#000;">192</div>
<div style="left:644px;top:449px;width:71px;height:27px;background:#716F64"></div>
<div style="left:644px;top:449px;width:70px;height:26px;background:#FFFFFF"></div>
<div style="left:645px;top:450px;width:69px;height:25px;background:#ACA899"></div>
<div style="left:645px;top:450px;width:68px;height:24px;background:#F1EFE2"></div>
<div style="left:646px;top:451px;width:67px;height:23px;background:#ECE9D8"></div>
<div class="t" style="left:644px;top:456px;width:71px;text-align:center;color:#000;">Query</div>
<div style="left:723px;top:448px;width:70px;height:28px;background:#716F64"></div>
<div style="left:723px;top:448px;width:69px;height:27px;background:#FFFFFF"></div>
<div style="left:724px;top:449px;width:68px;height:26px;background:#ACA899"></div>
<div style="left:724px;top:449px;width:67px;height:25px;background:#F1EFE2"></div>
<div style="left:725px;top:450px;width:66px;height:24px;background:#ECE9D8"></div>
<div class="t" style="left:723px;top:456px;width:70px;text-align:center;color:#000;">Insert</div>
<div style="left:802px;top:448px;width:105px;height:28px;background:#716F64"></div>
<div style="left:802px;top:448px;width:104px;height:27px;background:#FFFFFF"></div>
<div style="left:803px;top:449px;width:103px;height:26px;background:#ACA899"></div>
<div style="left:803px;top:449px;width:102px;height:25px;background:#F1EFE2"></div>
<div style="left:804px;top:450px;width:101px;height:24px;background:#ECE9D8"></div>
<div class="t" style="left:802px;top:456px;width:105px;text-align:center;color:#000;">InsertReplace</div>
<div style="left:915px;top:448px;width:71px;height:28px;background:#716F64"></div>
<div style="left:915px;top:448px;width:70px;height:27px;background:#FFFFFF"></div>
<div style="left:916px;top:449px;width:69px;height:26px;background:#ACA899"></div>
<div style="left:916px;top:449px;width:68px;height:25px;background:#F1EFE2"></div>
<div style="left:917px;top:450px;width:67px;height:24px;background:#ECE9D8"></div>
<div class="t" style="left:915px;top:456px;width:71px;text-align:center;color:#000;">Replace</div>
<div style="left:644px;top:484px;width:88px;height:26px;background:#716F64"></div>
<div style="left:644px;top:484px;width:87px;height:25px;background:#FFFFFF"></div>
<div style="left:645px;top:485px;width:86px;height:24px;background:#ACA899"></div>
<div style="left:645px;top:485px;width:85px;height:23px;background:#F1EFE2"></div>
<div style="left:646px;top:486px;width:84px;height:22px;background:#ECE9D8"></div>
<div class="t" style="left:644px;top:491px;width:88px;text-align:center;color:#000;">Delete Raw</div>
<div style="left:745px;top:483px;width:122px;height:27px;background:#716F64"></div>
<div style="left:745px;top:483px;width:121px;height:26px;background:#FFFFFF"></div>
<div style="left:746px;top:484px;width:120px;height:25px;background:#ACA899"></div>
<div style="left:746px;top:484px;width:119px;height:24px;background:#F1EFE2"></div>
<div style="left:747px;top:485px;width:118px;height:23px;background:#ECE9D8"></div>
<div class="t" style="left:745px;top:490px;width:122px;text-align:center;color:#000;">Delete AT Time</div>
<div style="left:915px;top:483px;width:71px;height:27px;background:#716F64"></div>
<div style="left:915px;top:483px;width:70px;height:26px;background:#FFFFFF"></div>
<div style="left:916px;top:484px;width:69px;height:25px;background:#ACA899"></div>
<div style="left:916px;top:484px;width:68px;height:24px;background:#F1EFE2"></div>
<div style="left:917px;top:485px;width:67px;height:23px;background:#ECE9D8"></div>
<div class="t" style="left:915px;top:490px;width:71px;text-align:center;color:#000;">Cancel</div>
<div style="left:636px;top:539px;width:364px;height:76px;border:1px solid #FFFFFF;box-sizing:border-box"></div>
<div style="left:635px;top:538px;width:364px;height:76px;border:1px solid #ACA899;box-sizing:border-box"></div>
<div style="left:643px;top:532px;width:63px;height:13px;background:#ECE9D8"></div>
<div class="t" style="left:645px;top:534px;color:#000;">Annotations</div>
<div style="left:640px;top:555px;width:346px;height:20px;background:#FFFFFF"></div>
<div style="left:640px;top:555px;width:345px;height:19px;background:#ACA899"></div>
<div style="left:641px;top:556px;width:344px;height:18px;background:#F1EFE2"></div>
<div style="left:641px;top:556px;width:343px;height:17px;background:#716F64"></div>
<div style="left:642px;top:557px;width:342px;height:16px;background:#FFFFFF"></div>
<div style="left:640px;top:581px;width:70px;height:26px;background:#716F64"></div>
<div style="left:640px;top:581px;width:69px;height:25px;background:#FFFFFF"></div>
<div style="left:641px;top:582px;width:68px;height:24px;background:#ACA899"></div>
<div style="left:641px;top:582px;width:67px;height:23px;background:#F1EFE2"></div>
<div style="left:642px;top:583px;width:66px;height:22px;background:#ECE9D8"></div>
<div class="t" style="left:640px;top:588px;width:70px;text-align:center;color:#000;">Query</div>
<div style="left:727px;top:581px;width:71px;height:26px;background:#716F64"></div>
<div style="left:727px;top:581px;width:70px;height:25px;background:#FFFFFF"></div>
<div style="left:728px;top:582px;width:69px;height:24px;background:#ACA899"></div>
<div style="left:728px;top:582px;width:68px;height:23px;background:#F1EFE2"></div>
<div style="left:729px;top:583px;width:67px;height:22px;background:#ECE9D8"></div>
<div class="t" style="left:727px;top:588px;width:71px;text-align:center;color:#000;">Read</div>
<div style="left:810px;top:581px;width:71px;height:26px;background:#716F64"></div>
<div style="left:810px;top:581px;width:70px;height:25px;background:#FFFFFF"></div>
<div style="left:811px;top:582px;width:69px;height:24px;background:#ACA899"></div>
<div style="left:811px;top:582px;width:68px;height:23px;background:#F1EFE2"></div>
<div style="left:812px;top:583px;width:67px;height:22px;background:#ECE9D8"></div>
<div class="t" style="left:810px;top:588px;width:71px;text-align:center;color:#000;">Insert</div>
<div style="left:915px;top:581px;width:71px;height:26px;background:#716F64"></div>
<div style="left:915px;top:581px;width:70px;height:25px;background:#FFFFFF"></div>
<div style="left:916px;top:582px;width:69px;height:24px;background:#ACA899"></div>
<div style="left:916px;top:582px;width:68px;height:23px;background:#F1EFE2"></div>
<div style="left:917px;top:583px;width:67px;height:22px;background:#ECE9D8"></div>
<div class="t" style="left:915px;top:588px;width:71px;text-align:center;color:#000;">Cancel</div>
<div style="left:636px;top:631px;width:364px;height:88px;border:1px solid #FFFFFF;box-sizing:border-box"></div>
<div style="left:635px;top:630px;width:364px;height:88px;border:1px solid #ACA899;box-sizing:border-box"></div>
<div style="left:643px;top:624px;width:49px;height:13px;background:#ECE9D8"></div>
<div class="t" style="left:645px;top:626px;color:#000;">Playback</div>
<div style="left:644px;top:642px;width:79px;height:19px;background:#FFFFFF"></div>
<div style="left:644px;top:642px;width:78px;height:18px;background:#ACA899"></div>
<div style="left:645px;top:643px;width:77px;height:17px;background:#F1EFE2"></div>
<div style="left:645px;top:643px;width:76px;height:16px;background:#716F64"></div>
<div style="left:646px;top:644px;width:75px;height:15px;background:#FFFFFF"></div>
<div class="t" style="left:647px;top:646px;color:#000;">1:0:0</div>
<div class="t" style="left:725px;top:643px;color:#000;">Duration/Resample Interval</div>
<div style="left:644px;top:669px;width:79px;height:19px;background:#FFFFFF"></div>
<div style="left:644px;top:669px;width:78px;height:18px;background:#ACA899"></div>
<div style="left:645px;top:670px;width:77px;height:17px;background:#F1EFE2"></div>
<div style="left:645px;top:670px;width:76px;height:16px;background:#716F64"></div>
<div style="left:646px;top:671px;width:75px;height:15px;background:#FFFFFF"></div>
<div class="t" style="left:647px;top:673px;color:#000;">0:0:10</div>
<div class="t" style="left:725px;top:670px;color:#000;">Update Interval</div>
<div style="left:644px;top:695px;width:154px;height:19px;background:#FFFFFF"></div>
<div style="left:644px;top:695px;width:153px;height:18px;background:#ACA899"></div>
<div style="left:645px;top:696px;width:152px;height:17px;background:#F1EFE2"></div>
<div style="left:645px;top:696px;width:151px;height:16px;background:#716F64"></div>
<div style="left:646px;top:697px;width:150px;height:15px;background:#FFFFFF"></div>
<div class="t" style="left:647px;top:699px;color:#000;">1,2,3</div>
<div class="t" style="left:803px;top:696px;color:#000;">Aggregates</div>
<div style="left:907px;top:638px;width:79px;height:22px;background:#716F64"></div>
<div style="left:907px;top:638px;width:78px;height:21px;background:#FFFFFF"></div>
<div style="left:908px;top:639px;width:77px;height:20px;background:#ACA899"></div>
<div style="left:908px;top:639px;width:76px;height:19px;background:#F1EFE2"></div>
<div style="left:909px;top:640px;width:75px;height:18px;background:#ECE9D8"></div>
<div class="t" style="left:907px;top:643px;width:79px;text-align:center;color:#000;">Raw</div>
<div style="left:907px;top:665px;width:79px;height:22px;background:#716F64"></div>
<div style="left:907px;top:665px;width:78px;height:21px;background:#FFFFFF"></div>
<div style="left:908px;top:666px;width:77px;height:20px;background:#ACA899"></div>
<div style="left:908px;top:666px;width:76px;height:19px;background:#F1EFE2"></div>
<div style="left:909px;top:667px;width:75px;height:18px;background:#ECE9D8"></div>
<div class="t" style="left:907px;top:670px;width:79px;text-align:center;color:#000;">Processed</div>
<div style="left:907px;top:691px;width:79px;height:21px;background:#716F64"></div>
<div style="left:907px;top:691px;width:78px;height:20px;background:#FFFFFF"></div>
<div style="left:908px;top:692px;width:77px;height:19px;background:#ACA899"></div>
<div style="left:908px;top:692px;width:76px;height:18px;background:#F1EFE2"></div>
<div style="left:909px;top:693px;width:75px;height:17px;background:#ECE9D8"></div>
<div class="t" style="left:907px;top:695px;width:79px;text-align:center;color:#000;">Cancel</div>
</body></html>
